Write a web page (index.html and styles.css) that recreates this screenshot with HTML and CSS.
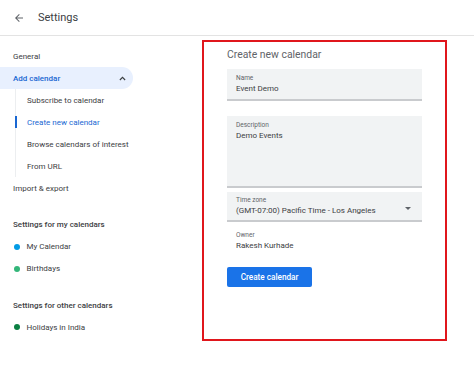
FILE: index.html
```html
<!DOCTYPE html>
<html lang="en">
<head>
  <meta charset="UTF-8">
  <meta name="viewport" content="width=device-width,initial-scale=1.0">
  <title>Settings</title>
  <link rel="stylesheet" href="styles.css">
</head>
<body>
  <header class="topbar">
    <svg class="back" viewBox="0 0 24 24" width="12" height="12"><path d="M20 11H7.83l5.59-5.59L12 4l-8 8 8 8 1.41-1.41L7.83 13H20v-2z"/></svg>
    <span class="title">Settings</span>
  </header>

  <div class="layout">
    <!-- サイドメニュー -->
    <nav class="sidebar">
      <div class="item">General</div>
      <div class="item open">
        <span>Add calendar</span>
        <svg class="chev" viewBox="0 0 8 5" width="7" height="5"><path d="M1 4.2 4 1.2 7 4.2" fill="none" stroke="#3c4043" stroke-width="1.3"/></svg>
      </div>
      <div class="sublist">
        <div class="item">Subscribe to calendar</div>
        <div class="item active">Create new calendar</div>
        <div class="item">Browse calendars of interest</div>
        <div class="item">From URL</div>
      </div>
      <div class="item">Import &amp; export</div>

      <div class="item section">Settings for my calendars</div>
      <div class="item cal"><span class="dot blue"></span>My Calendar</div>
      <div class="item cal"><span class="dot green"></span>Birthdays</div>

      <div class="item section">Settings for other calendars</div>
      <div class="item cal"><span class="dot dark"></span>Holidays in India</div>
    </nav>

    <!-- フォーム -->
    <main class="panel">
      <h2>Create new calendar</h2>
      <div class="field">
        <div class="label">Name</div>
        <div class="value">Event Demo</div>
      </div>
      <div class="field desc">
        <div class="label">Description</div>
        <div class="value">Demo Events</div>
      </div>
      <div class="field select">
        <div>
          <div class="label">Time zone</div>
          <div class="value">(GMT-07:00) Pacific Time - Los Angeles</div>
        </div>
        <svg class="drop" viewBox="0 0 10 5" width="6" height="3"><path d="M0 0l5 5 5-5z" fill="#5f6368"/></svg>
      </div>
      <div class="owner">
        <div class="label">Owner</div>
        <div class="value">Rakesh Kurhade</div>
      </div>
      <button class="create">Create calendar</button>
    </main>
  </div>
</body>
</html>
```

FILE: styles.css
```css
/* ——— 全体 ——— */
:root {
  --fg: #3c4043; --muted: #5f6368;
  --border: #e3e3e3; --field: #f1f3f4;
  --primary: #1a73e8; --active: #1967d2;
  --pill: #e8f0fe; --mark: #e0161c;
}
body {
  margin:0; font-family:Roboto,"Liberation Sans",sans-serif;
  color:var(--fg); background:#fff;
}
.topbar {
  height:35px; display:flex; align-items:center;
  padding-left:13px; border-bottom:1px solid var(--border);
}
.back { fill:var(--muted); }
.title { margin-left:13px; font-size:11px; color:var(--fg); }

.layout { display:flex; }

/* ——— サイドバー ——— */
.sidebar { width:202px; padding-top:9px; font-size:8px; }
.item {
  height:22px; display:flex; align-items:center;
  padding-left:13px; color:var(--fg);
}
.item.open {
  width:133px; box-sizing:border-box; padding-right:7px;
  justify-content:space-between;
  background:var(--pill); color:var(--active); font-weight:500;
  border-radius:0 11px 11px 0;
}
.sublist { margin-left:15px; border-left:1px solid #eceef0; }
.sublist .item { padding-left:11px; position:relative; }
.sublist .item.active { color:var(--active); }
.sublist .item.active::before {
  content:""; position:absolute; left:-1px; top:5px; bottom:5px;
  width:2px; background:var(--active);
}
.item.section { margin-top:14.5px; font-weight:500; color:#3c4043; }
.item.cal { gap:7px; padding-left:13.5px; }
.dot { width:6px; height:6px; border-radius:50%; }
.dot.blue { background:#039be5; }
.dot.green { background:#33b679; }
.dot.dark { background:#0b8043; }

/* ——— パネル ——— */
.panel {
  margin-top:4px; width:245px; height:301px; box-sizing:border-box;
  border:2px solid var(--mark); padding:6px 23px 0;
}
h2 {
  margin:0; font-size:10.4px; line-height:14px;
  font-weight:400; color:var(--muted);
}
.field {
  margin-top:7px; height:32px; box-sizing:border-box;
  background:var(--field); border-bottom:2px solid #c9cbce;
  padding:5px 9px 0;
}
.field.desc { margin-top:15px; height:72px; }
.field.select {
  margin-top:4px; height:30px; padding-top:4px;
  display:flex; justify-content:space-between; align-items:center;
  padding-right:11px;
}
.field.select > div { align-self:flex-start; }
.label { font-size:6.5px; line-height:9px; color:var(--muted); }
.value { font-size:8px; line-height:12px; color:var(--fg); }
.owner { padding:9px 9px 0; }
.create {
  margin-top:15px; width:85px; height:20px; padding:0;
  background:var(--primary); color:#fff; border:none; border-radius:2px;
  font-family:Roboto,"Liberation Sans",sans-serif;
  font-size:8.2px; font-weight:500; cursor:pointer;
}
```
